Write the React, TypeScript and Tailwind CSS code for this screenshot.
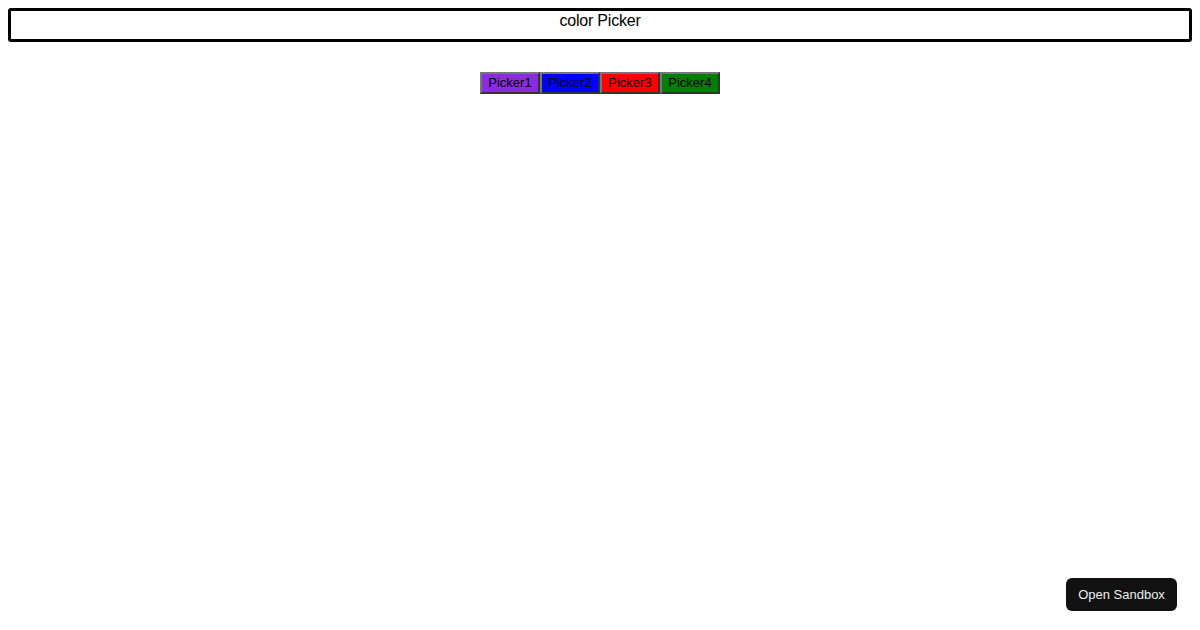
export default function App() {
  const pickers = [
    { label: "Picker1", bg: "bg-[#8a2be2]" },
    { label: "Picker2", bg: "bg-[#0000ff]" },
    { label: "Picker3", bg: "bg-[#ff0000]" },
    { label: "Picker4", bg: "bg-[#008000]" },
  ];
  return (
    <div className="relative h-[630px] w-[1200px] bg-white p-2 font-['Liberation_Sans',Arial,sans-serif] text-black">
      <div className="h-[34px] rounded-[3px] border-[3px] border-black text-center text-base leading-[20px] tracking-[-0.2px]">
        color Picker
      </div>
      <div className="mt-[30px] flex justify-center">
        {pickers.map((p) => (
          <button
            key={p.label}
            className={`h-[22px] w-[60px] border-2 border-t-[#767676] border-l-[#767676] border-r-[#333] border-b-[#333] pb-[2px] ${p.bg} text-[13px] leading-none text-black`}
          >
            {p.label}
          </button>
        ))}
      </div>
      <button className="absolute left-[1066px] top-[578px] h-[33px] w-[111px] rounded-md bg-[#111111] text-[13px] text-[#eeeeee]">
        Open Sandbox
      </button>
    </div>
  );
}
